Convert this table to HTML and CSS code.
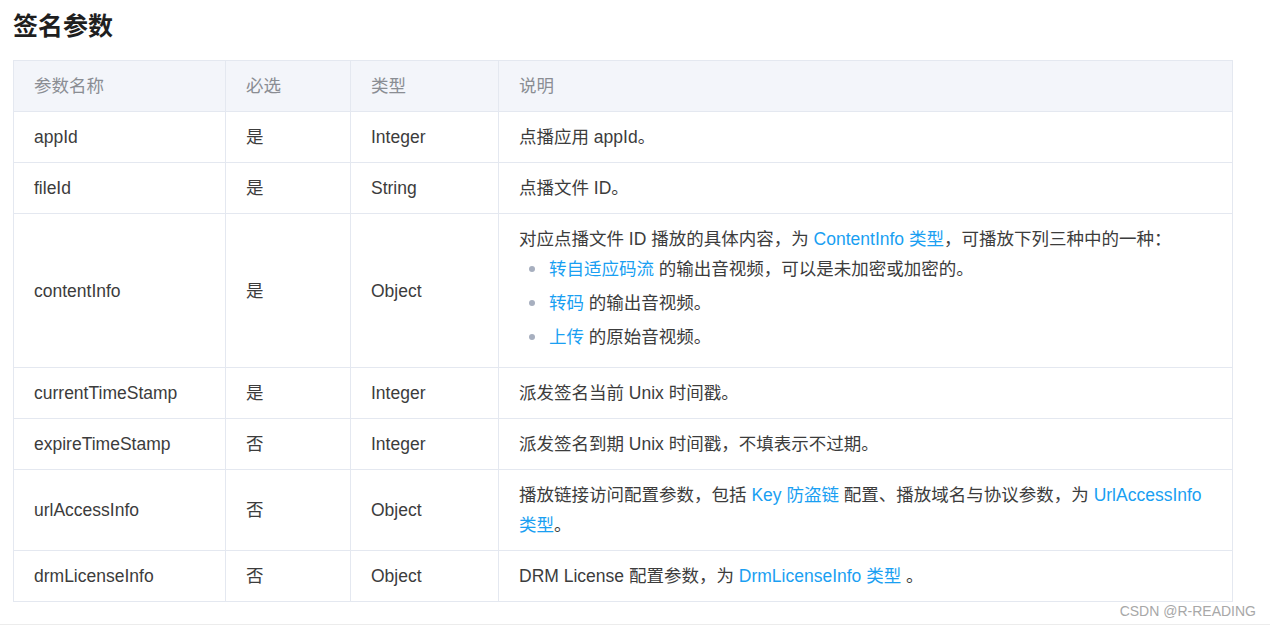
FILE: index.html
```html
<!DOCTYPE html>
<html lang="zh-CN">
<head>
<meta charset="utf-8">
<title>签名参数</title>
<link rel="stylesheet" href="styles.css">
</head>
<body>
<div class="page">
  <h2 class="title">签名参数</h2>
  <table class="params">
    <colgroup>
      <col class="c-name">
      <col class="c-req">
      <col class="c-type">
      <col class="c-desc">
    </colgroup>
    <thead>
      <tr><th>参数名称</th><th>必选</th><th>类型</th><th>说明</th></tr>
    </thead>
    <tbody>
      <tr><td>appId</td><td>是</td><td>Integer</td><td>点播应用 appId。</td></tr>
      <tr><td>fileId</td><td>是</td><td>String</td><td>点播文件 ID。</td></tr>
      <tr>
        <td>contentInfo</td><td>是</td><td>Object</td>
        <td>
          <div>对应点播文件 ID 播放的具体内容，为 <a class="link">ContentInfo 类型</a>，可播放下列三种中的一种：</div>
          <ul class="list">
            <li><a class="link">转自适应码流</a> 的输出音视频，可以是未加密或加密的。</li>
            <li><a class="link">转码</a> 的输出音视频。</li>
            <li><a class="link">上传</a> 的原始音视频。</li>
          </ul>
        </td>
      </tr>
      <tr><td>currentTimeStamp</td><td>是</td><td>Integer</td><td>派发签名当前 Unix 时间戳。</td></tr>
      <tr><td>expireTimeStamp</td><td>否</td><td>Integer</td><td>派发签名到期 Unix 时间戳，不填表示不过期。</td></tr>
      <tr><td>urlAccessInfo</td><td>否</td><td>Object</td><td>播放链接访问配置参数，包括 <a class="link">Key 防盗链</a> 配置、播放域名与协议参数，为 <a class="link">UrlAccessInfo 类型</a>。</td></tr>
      <tr><td>drmLicenseInfo</td><td>否</td><td>Object</td><td>DRM License 配置参数，为 <a class="link">DrmLicenseInfo 类型</a> 。</td></tr>
    </tbody>
  </table>
  <div class="watermark">CSDN @R-READING</div>
</div>
</body>
</html>
```

FILE: styles.css
```css
html, body {
  margin: 0;
  padding: 0;
  background: #ffffff;
}
body {
  font-family: "Liberation Sans", "Noto Sans CJK SC", sans-serif;
  color: #3c3c3c;
  font-size: 17.5px;
}
.page {
  position: relative;
  padding: 10px 13px 0;
  height: 614px;
  border-bottom: 1px solid #ececec;
}
.title {
  margin: 0 0 18px;
  font-size: 25px;
  line-height: 32px;
  font-weight: bold;
  color: #1f1f1f;
}
.params {
  width: 1219px;
  border-collapse: collapse;
  table-layout: fixed;
}
.c-name { width: 212px; }
.c-req { width: 125px; }
.c-type { width: 148px; }
.c-desc { width: 734px; }
.params th,
.params td {
  border: 1px solid #e4e8f0;
  padding: 10px 20px;
  line-height: 30px;
  text-align: left;
  vertical-align: middle;
  font-weight: normal;
}
.params th {
  background: #f3f5fa;
  color: #8a8d93;
}
.link {
  color: #1a9ff2;
  text-decoration: none;
}
.list {
  list-style: none;
  margin: 0;
  padding: 0 0 5px 10px;
}
.list li {
  position: relative;
  padding-left: 20px;
  line-height: 30px;
}
.list li + li {
  margin-top: 4px;
}
.list li::before {
  content: "";
  position: absolute;
  left: 0;
  top: 12px;
  width: 6px;
  height: 6px;
  border-radius: 50%;
  background: #a7afbf;
}
.watermark {
  position: absolute;
  right: 14px;
  bottom: 5px;
  font-size: 14px;
  line-height: 16px;
  color: #a8a8a8;
}
```
